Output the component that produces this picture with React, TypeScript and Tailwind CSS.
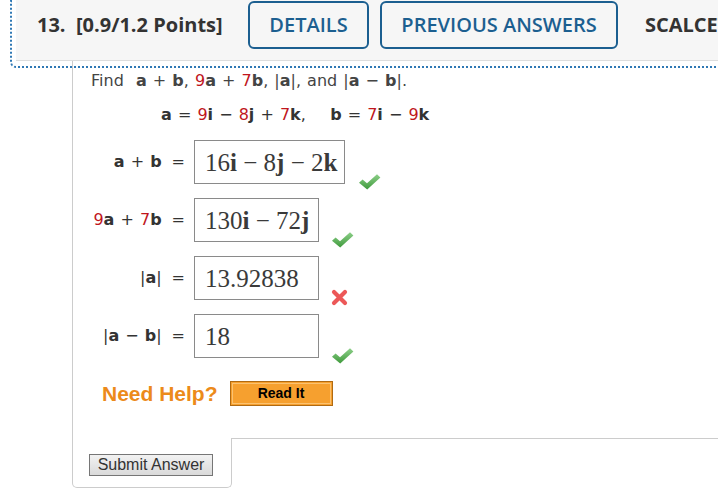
import React from "react";

const Red = ({ children }: { children: React.ReactNode }) => (
  <span className="text-[#c0161d]">{children}</span>
);
const B = ({ children }: { children: React.ReactNode }) => (
  <span className="font-bold">{children}</span>
);

function Check() {
  return (
    <svg width="23" height="17" viewBox="0 0 23 17">
      <defs>
        <linearGradient id="cg" x1="0" y1="0" x2="0" y2="1">
          <stop offset="0" stopColor="#8ed08a" />
          <stop offset="1" stopColor="#3f9a3c" />
        </linearGradient>
      </defs>
      <path d="M1 9.8 L4.6 6.4 L9 10.2 L19 1.2 L22.4 4.6 L9.2 16.4 Z" fill="url(#cg)" />
    </svg>
  );
}

function Cross() {
  return (
    <svg width="17" height="17" viewBox="0 0 17 17">
      <path d="M3 3 L14 14 M14 3 L3 14" stroke="#ec5858" strokeWidth="4.2" strokeLinecap="round" />
    </svg>
  );
}

function Row({
  label,
  value,
  width,
  ok,
  iconGap,
}: {
  label: React.ReactNode;
  value: React.ReactNode;
  width: string;
  ok: boolean;
  iconGap: string;
}) {
  return (
    <div className="flex items-end">
      <div className="w-[94px] h-[44px] flex items-center justify-end gap-[10px] text-[16px] text-[#333] font-['DejaVu_Sans',sans-serif] whitespace-pre [word-spacing:1px]">
        <span>{label}</span>
        <span>=</span>
      </div>
      <div
        className={`ml-[9px] h-[44px] ${width} shrink-0 border border-[#8a8a8a] bg-white flex items-center pl-[10px] pt-[1px] text-[25px] leading-none text-[#3a3a3a] font-['Liberation_Serif',serif]`}
      >
        {value}
      </div>
      <div className={`${iconGap} mb-[-6px]`}>{ok ? <Check /> : <Cross />}</div>
    </div>
  );
}

export default function App() {
  return (
    <div className="w-[718px] h-[494px] overflow-hidden bg-white relative">
      {/* Header */}
      <div className="ml-[10px] w-[800px] border-l-2 border-b-2 border-dotted border-[#2f78b4] rounded-bl-[6px] pl-[4px] pb-[5px]">
        <div className="h-[61px] bg-[#f6f6f6] border-b border-[#dddddd] flex items-start pt-[1px] pl-[21px] font-['Open_Sans',sans-serif] overflow-hidden">
          <div className="w-[211px] shrink-0 h-[48px] flex items-center text-[20px] font-bold text-[#333] whitespace-pre">
            13.{"  "}[0.9/1.2 Points]
          </div>
          <div className="w-[121px] shrink-0 h-[48px] border-2 border-[#1c5f90] rounded-[6px] flex items-center justify-center text-[20px] font-semibold text-[#1c5f90]">
            DETAILS
          </div>
          <div className="ml-[11px] w-[238px] shrink-0 h-[48px] border-2 border-[#1c5f90] rounded-[6px] flex items-center justify-center text-[20px] font-semibold text-[#1c5f90] whitespace-nowrap">
            PREVIOUS ANSWERS
          </div>
          <div className="ml-[27px] shrink-0 h-[48px] flex items-center text-[20px] font-bold text-[#333] whitespace-nowrap">
            SCALCET9 12.2.019.
          </div>
        </div>
      </div>

      {/* Content */}
      <div className="ml-[72px] mt-[-7px] relative">
        <div className="border-l border-[#cccccc] pl-[18px] pt-[10px] pb-[32px]">
          <div className="h-[20px] leading-[20px] text-[16px] text-[#444] font-['DejaVu_Sans',sans-serif] whitespace-pre [word-spacing:1px]">
            Find  <B>a</B> + <B>b</B>, <Red>9</Red><B>a</B> + <Red>7</Red><B>b</B>, |<B>a</B>|, and |<B>a</B> − <B>b</B>|.
          </div>
          <div className="mt-[14px] pl-[70px] h-[20px] leading-[20px] text-[16px] text-[#333] font-['DejaVu_Sans',sans-serif] whitespace-pre [word-spacing:1px]">
            <B>a</B> = <Red>9</Red><B>i</B> − <Red>8</Red><B>j</B> + <Red>7</Red><B>k</B>,    <B>b</B> = <Red>7</Red><B>i</B> − <Red>9</Red><B>k</B>
          </div>

          <div className="mt-[15px] flex flex-col gap-[14px]">
            <Row
              label={<><B>a</B> + <B>b</B></>}
              value={<span className="whitespace-pre">16<b>i</b> − 8<b>j</b> − 2<b>k</b></span>}
              width="w-[151px]"
              ok
              iconGap="ml-[13px]"
            />
            <Row
              label={<><Red>9</Red><B>a</B> + <Red>7</Red><B>b</B></>}
              value={<span className="whitespace-pre">130<b>i</b> − 72<b>j</b></span>}
              width="w-[125px]"
              ok
              iconGap="ml-[12px]"
            />
            <Row
              label={<>|<B>a</B>|</>}
              value={<span>13.92838</span>}
              width="w-[125px]"
              ok={false}
              iconGap="ml-[12px]"
            />
            <Row
              label={<>|<B>a</B> − <B>b</B>|</>}
              value={<span>18</span>}
              width="w-[125px]"
              ok
              iconGap="ml-[12px]"
            />
          </div>

          <div className="mt-[23px] h-[25px] flex items-center pl-[11px] font-['Liberation_Sans',sans-serif]">
            <span className="text-[21px] font-bold text-[#ec8a1a]">Need Help?</span>
            <div className="ml-[12px] w-[103px] h-[25px] border border-[#b06a12] bg-[#f6a02f] p-[1px]">
              <div className="w-full h-full border border-[#fbc270] flex items-center justify-center text-[14px] font-bold text-black">
                Read It
              </div>
            </div>
          </div>
        </div>

        <div className="flex">
          <div className="w-[160px] h-[50px] border-l border-r border-b border-[#cccccc] rounded-b-[5px] pl-[16px] pt-[16px]">
            <div className="w-[124px] h-[22px] border border-[#767676] bg-gradient-to-b from-[#f2f2f2] to-[#dadada] flex items-center justify-center text-[16px] text-[#333] font-['Liberation_Sans',sans-serif]">
              Submit Answer
            </div>
          </div>
          <div className="flex-1 border-t border-[#cccccc]" />
        </div>
      </div>
    </div>
  );
}
